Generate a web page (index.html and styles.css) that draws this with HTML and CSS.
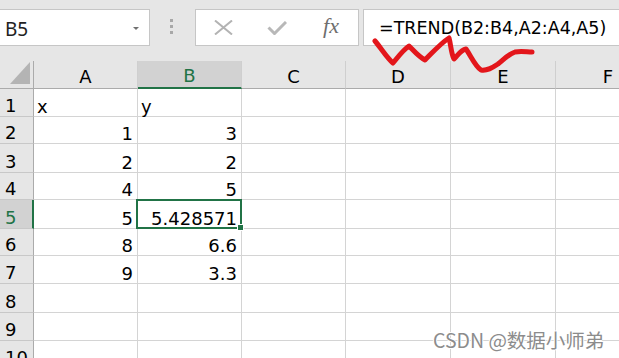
FILE: index.html
```html
<!DOCTYPE html>
<html lang="zh-CN">
<head>
    <meta charset="UTF-8">
    <title>TREND</title>
    <link rel="stylesheet" href="styles.css">
</head>
<body>
    <div class="formula-bar">
        <div class="name-box">
            <span>B5</span>
            <span class="arrow"></span>
        </div>
        <div class="grip"><i></i><i></i><i></i></div>
        <div class="fx-buttons">
            <span class="fx-btn">
                <svg width="19" height="15" viewBox="0 0 19 15"><path d="M1 0.5L18 14.5M18 0.5L1 14.5" stroke="#b3b3b3" stroke-width="2" fill="none"/></svg>
            </span>
            <span class="fx-btn">
                <svg width="20" height="14" viewBox="0 0 20 14"><path d="M1.5 6.5L7.5 12.5L19 1" stroke="#b8b8b8" stroke-width="3" fill="none"/></svg>
            </span>
            <span class="fx-btn fx">fx</span>
        </div>
        <div class="formula-input">=TREND(B2:B4,A2:A4,A5)</div>
    </div>

    <div class="sheet">
        <div class="corner"><svg width="20" height="22" viewBox="0 0 20 22"><polygon points="20,0 20,22 0,22" fill="#b4b4b4"/></svg></div>
        <div class="hd">A</div>
        <div class="hd sel-col">B</div>
        <div class="hd">C</div>
        <div class="hd">D</div>
        <div class="hd">E</div>
        <div class="hd">F</div>

        <div class="rh">1</div>
        <div class="c">x</div><div class="c">y</div><div class="c"></div><div class="c"></div><div class="c"></div><div class="c"></div>

        <div class="rh">2</div>
        <div class="c num">1</div><div class="c num">3</div><div class="c"></div><div class="c"></div><div class="c"></div><div class="c"></div>

        <div class="rh">3</div>
        <div class="c num">2</div><div class="c num">2</div><div class="c"></div><div class="c"></div><div class="c"></div><div class="c"></div>

        <div class="rh">4</div>
        <div class="c num">4</div><div class="c num">5</div><div class="c"></div><div class="c"></div><div class="c"></div><div class="c"></div>

        <div class="rh sel-row">5</div>
        <div class="c num">5</div>
        <div class="c num active">5.428571<span class="cursor"><span class="handle"></span></span></div>
        <div class="c"></div><div class="c"></div><div class="c"></div><div class="c"></div>

        <div class="rh">6</div>
        <div class="c num">8</div><div class="c num">6.6</div><div class="c"></div><div class="c"></div><div class="c"></div><div class="c"></div>

        <div class="rh">7</div>
        <div class="c num">9</div><div class="c num">3.3</div><div class="c"></div><div class="c"></div><div class="c"></div><div class="c"></div>

        <div class="rh">8</div>
        <div class="c"></div><div class="c"></div><div class="c"></div><div class="c"></div><div class="c"></div><div class="c"></div>

        <div class="rh">9</div>
        <div class="c"></div><div class="c"></div><div class="c"></div><div class="c"></div><div class="c"></div><div class="c"></div>

        <div class="rh">10</div>
        <div class="c"></div><div class="c"></div><div class="c"></div><div class="c"></div><div class="c"></div><div class="c"></div>
    </div>

    <!-- hand-drawn red mark under the formula -->
    <svg class="scribble" width="619" height="358" viewBox="0 0 619 358">
        <path d="M375 41 C381 48 387 58 393 63 C398 57 403 50 409 46 C414 51 419 57 425 60 C433 52 441 43 449 38 C451 45 451 53 454 59 C458 55 461 50 466 49 C471 56 475 66 481 70 C487 71 492 68 498 64 C504 59 509 54 515 52 C521 51 527 52 532 52"
              stroke="#e3161b" stroke-width="5" fill="none" stroke-linecap="round" stroke-linejoin="round"/>
    </svg>

    <div class="watermark">CSDN @数据小师弟</div>
</body>
</html>
```

FILE: styles.css
```css
body {
    margin: 0;
    width: 619px;
    height: 358px;
    overflow: hidden;
    background-color: #e6e6e6;
    position: relative;
}

/* formula bar */
.formula-bar {
    display: flex;
    align-items: flex-start;
    height: 61px;
    padding-top: 9px;
    box-sizing: border-box;
}
.name-box {
    display: flex;
    align-items: center;
    width: 150px;
    height: 37px;
    box-sizing: border-box;
    padding: 2px 0 0 5px;
    background: #fff;
    border: 1px solid #c6c6c6;
    border-left: none;
    font-family: "Noto Sans", sans-serif;
    font-size: 19px;
    color: #222;
}
.name-box .arrow {
    margin-left: auto;
    margin-right: 10px;
    border-left: 3px solid transparent;
    border-right: 3px solid transparent;
    border-top: 3px solid #707070;
}
.grip {
    width: 45px;
    height: 37px;
    display: flex;
    flex-direction: column;
    align-items: center;
    justify-content: center;
    gap: 3px;
    padding: 0 2px 3px 0;
    box-sizing: border-box;
}
.grip i {
    width: 3px;
    height: 3px;
    background: #a8a8a8;
}
.fx-buttons {
    display: flex;
    width: 164px;
    height: 37px;
    box-sizing: border-box;
    background: #fff;
    border: 1px solid #c6c6c6;
}
.fx-btn {
    flex: 1;
    display: flex;
    align-items: center;
    justify-content: center;
}
.fx {
    font-family: "Liberation Serif", serif;
    font-style: italic;
    font-size: 22px;
    color: #6e6e6e;
    padding-bottom: 3px;
}
.formula-input {
    flex: 1;
    display: flex;
    align-items: center;
    height: 37px;
    box-sizing: border-box;
    margin-left: 4px;
    padding-left: 15px;
    background: #fff;
    border: 1px solid #c6c6c6;
    border-right: none;
    font-family: "DejaVu Sans", sans-serif;
    font-size: 17.5px;
    color: #000;
    white-space: nowrap;
}

/* sheet grid */
.sheet {
    display: grid;
    grid-template-columns: 34px 104px 104px 104px 105px 105px 105px;
    grid-template-rows: 28px 28px 27px 29px 27px 29px 27px 28px 29px 28px 28px;
    background: #fff;
    font-family: "DejaVu Sans", sans-serif;
    font-size: 18px;
    line-height: 18px;
    color: #000;
}
.sheet > div {
    display: flex;
    align-items: flex-end;
    box-sizing: border-box;
    padding: 0 4px;
    border-right: 1px solid #d4d4d4;
    border-bottom: 1px solid #d4d4d4;
    white-space: nowrap;
}
.sheet .c { padding-left: 3px; }
.sheet .num { justify-content: flex-end; }

.sheet .corner {
    justify-content: flex-end;
    padding: 0 3px 4px 0;
    background: #e6e6e6;
    border-right-color: #ababab;
    border-bottom-color: #ababab;
}
.sheet .hd {
    justify-content: center;
    padding-bottom: 2px;
    background: #e6e6e6;
    border-right-color: #cfcfcf;
    border-bottom-color: #ababab;
}
.sheet .rh {
    padding: 0 0 1px 5px;
    background: #e6e6e6;
    border-right-color: #ababab;
    border-bottom-color: #c8c8c8;
}
.sheet .sel-col {
    background: #d2d2d2;
    color: #217346;
    border-bottom: 2px solid #217346;
}
.sheet .sel-row {
    background: #d2d2d2;
    color: #217346;
    border-right: 2px solid #217346;
}

/* active cell B5 */
.active {
    position: relative;
}
.cursor {
    position: absolute;
    left: -2px;
    top: -1px;
    right: -1px;
    bottom: -1px;
    border: 2px solid #217346;
}
.handle {
    position: absolute;
    right: -4px;
    bottom: -4px;
    width: 5px;
    height: 5px;
    background: #217346;
    border: 1px solid #fff;
}

.scribble {
    position: absolute;
    left: 0;
    top: 0;
    pointer-events: none;
}

.watermark {
    position: absolute;
    left: 433px;
    top: 330px;
    line-height: 20px;
    font-family: "Noto Sans CJK SC", sans-serif;
    font-size: 19.5px;
    color: #8c8c8c;
    text-shadow: 1px 0 0 #fff, -1px 0 0 #fff, 0 1px 0 #fff, 0 -1px 0 #fff;
    white-space: nowrap;
}
```
